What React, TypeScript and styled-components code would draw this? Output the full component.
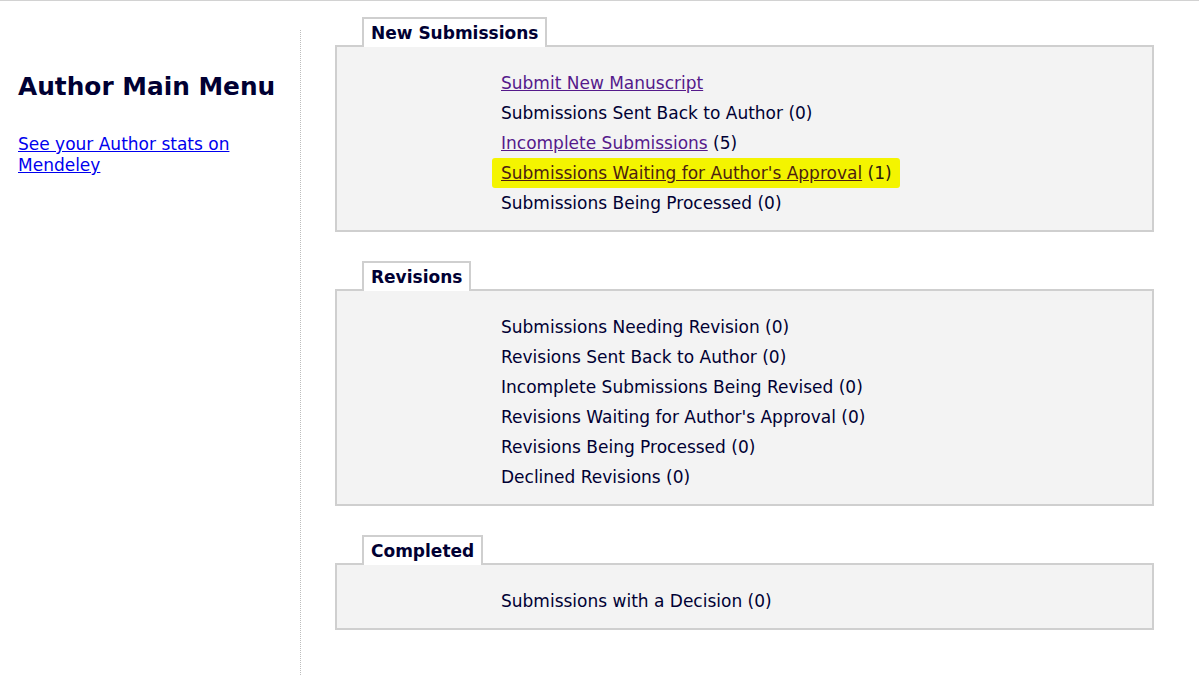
import React from "react";
import styled, { createGlobalStyle } from "styled-components";

const Global = createGlobalStyle`
  html, body { margin: 0; padding: 0; background: #fff; }
  body {
    font-family: "DejaVu Sans", Verdana, sans-serif;
    font-size: 17px;
    color: #000033;
  }
`;

const Page = styled.div`
  border-top: 1px solid #d2d2d2;
  display: flex;
  min-height: 674px;
`;

const Sidebar = styled.aside`
  width: 301px;
  flex: none;
  margin-top: 29px;
  padding: 0 18px;
  border-right: 1px dotted #bdbdbd;
  box-sizing: border-box;
`;

const Title = styled.h1`
  font-size: 24.8px;
  font-weight: bold;
  margin: 42px 0 0;
  line-height: 30px;
  white-space: nowrap;
  color: #000033;
`;

const SideLink = styled.a`
  display: block;
  margin-top: 32px;
  line-height: 21px;
  color: #0000ee;
  text-decoration: underline;
`;

const Main = styled.main`
  flex: none;
  width: 819px;
  margin-left: 34px;
  padding-top: 16px;
  display: flex;
  flex-direction: column;
  gap: 29px;
`;

const Section = styled.section`
  display: flex;
  flex-direction: column;
`;

const Tab = styled.div`
  align-self: flex-start;
  margin-left: 27px;
  margin-bottom: -2px;
  position: relative;
  z-index: 1;
  background: #fff;
  border: 2px solid #cfcfcf;
  border-bottom: none;
  padding: 0 7px;
  height: 28px;
  line-height: 28px;
  font-weight: bold;
  color: #000033;
`;

const Panel = styled.div`
  background: #f3f3f3;
  border: 2px solid #cfcfcf;
  padding: 21px 0 12px 164px;
  display: flex;
  flex-direction: column;
`;

const Row = styled.div`
  line-height: 30px;
  height: 30px;
  white-space: nowrap;
`;

const Visited = styled.a`
  color: #551a8b;
  text-decoration: underline;
`;

const Mark = styled.span`
  background: #f4f400;
  margin-left: -9px;
  padding: 0 8px 0 9px;
  border-radius: 3px;
  display: inline-block;
  line-height: 30px;
  color: #2a1a10;
  & a {
    color: #4d1f10;
  }
`;

type Item = { text: string; count?: string; link?: boolean; mark?: boolean };

const sections: { title: string; items: Item[] }[] = [
  {
    title: "New Submissions",
    items: [
      { text: "Submit New Manuscript", link: true },
      { text: "Submissions Sent Back to Author", count: "(0)" },
      { text: "Incomplete Submissions", count: "(5)", link: true },
      { text: "Submissions Waiting for Author's Approval", count: "(1)", link: true, mark: true },
      { text: "Submissions Being Processed", count: "(0)" },
    ],
  },
  {
    title: "Revisions",
    items: [
      { text: "Submissions Needing Revision", count: "(0)" },
      { text: "Revisions Sent Back to Author", count: "(0)" },
      { text: "Incomplete Submissions Being Revised", count: "(0)" },
      { text: "Revisions Waiting for Author's Approval", count: "(0)" },
      { text: "Revisions Being Processed", count: "(0)" },
      { text: "Declined Revisions", count: "(0)" },
    ],
  },
  {
    title: "Completed",
    items: [{ text: "Submissions with a Decision", count: "(0)" }],
  },
];

function ItemRow({ item }: { item: Item }) {
  const label = item.link ? <Visited href="#">{item.text}</Visited> : item.text;
  const content = (
    <>
      {label}
      {item.count ? ` ${item.count}` : null}
    </>
  );
  return <Row>{item.mark ? <Mark>{content}</Mark> : content}</Row>;
}

export default function App() {
  return (
    <>
      <Global />
      <Page>
        <Sidebar>
          <Title>Author Main Menu</Title>
          <SideLink href="#">See your Author stats on Mendeley</SideLink>
        </Sidebar>
        <Main>
          {sections.map((s) => (
            <Section key={s.title}>
              <Tab>{s.title}</Tab>
              <Panel>
                {s.items.map((it) => (
                  <ItemRow key={it.text} item={it} />
                ))}
              </Panel>
            </Section>
          ))}
        </Main>
      </Page>
    </>
  );
}
